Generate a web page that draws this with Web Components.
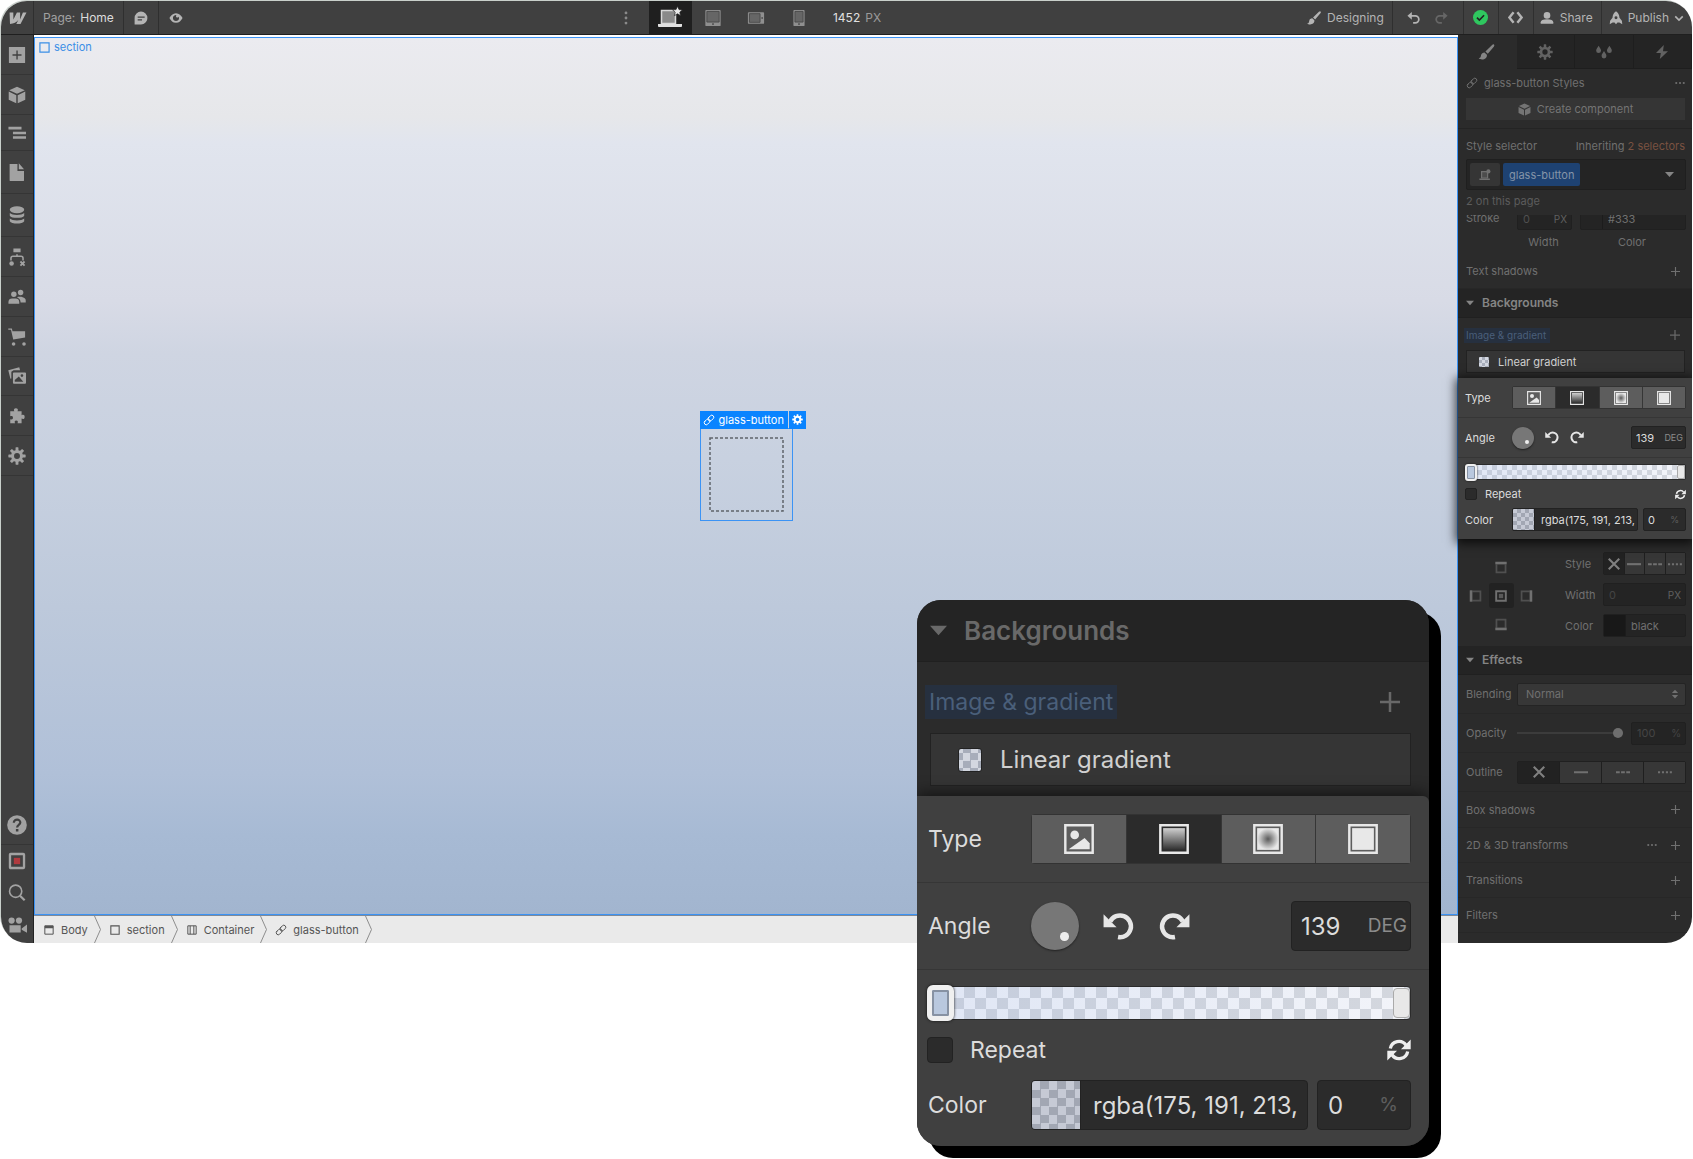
<!DOCTYPE html>
<html lang="en">
<head>
<meta charset="utf-8">
<title>Designer - Home</title>
<style>
html{background:#fff}
body{margin:0;position:relative;min-height:100vh;font-family:Inter,"Liberation Sans",sans-serif;font-size:11px;line-height:16px}
zoom-card{position:absolute;top:600px;right:264px}
</style>
</head>
<body>
<designer-app></designer-app>
<zoom-card></zoom-card>
<script>
const gearTeeth = (c, r, w, h) => [0,45,90,135,180,225,270,315].map(a => `<rect x="${c-w/2}" y="${c-r}" width="${w}" height="${h}" rx=".5" transform="rotate(${a} ${c} ${c})"/>`).join('');
const gear = `<circle cx="10" cy="10" r="5" fill="none" stroke="currentColor" stroke-width="3.4"/>${gearTeeth(10,9.6,3.2,4)}`;
const cube = `<path d="M10 .8l8.6 3.9L10 8.700 1.400 4.700zM.8 6.200l8.400 4v9L.8 15.200zM19.200 6.200l-8.400 4v9l8.400-4z"/>`;
const link = `<g fill="none" stroke="currentColor" stroke-width="1.500" stroke-linecap="round" transform="rotate(-45 8 8)"><rect x="-1.500" y="4.800" width="10.500" height="6.400" rx="3.200"/><rect x="7" y="4.800" width="10.500" height="6.400" rx="3.200"/></g>`;
const brush = `<path d="M15.400.5c.7.6.5 1.400-.1 2.200L9.300 9.800 6.900 7.500 13.600.9c.6-.5 1.300-.8 1.800-.4zM6 8.400l2.400 2.300c.4 2.800-2 4.700-4.800 4.800-1.400 0-2.700-.5-3.400-1.200 2.100-.4 1.900-1.500 2.400-3.300C3 9.500 4.300 8.400 6 8.400z"/>`;
const undo = `<path d="M2.500 5.500h7a4 4 0 0 1 0 8H7" fill="none" stroke="currentColor" stroke-width="2"/><path d="M.5 5.500L5.500 1v9z"/>`;
const rotate = `<path d="M4 5.300a6 6 0 1 1 4.300 8.500" fill="none" stroke="currentColor" stroke-width="2.500"/><path d="M.3 1.200v7.200h7.200z"/>`;
const ICONS = {
  logo:[20,`<path d="M19.500 4.500l-6 11.600H9.300l2-4C9.600 14.300 6.900 15.800 3 16.100l-.4-11.600h3.700l.1 7 3.500-7h3.200l0 6.900 2.800-6.900z"/>`],
  add:[20,`<path fill-rule="evenodd" d="M1.500 1h17a.5.500 0 0 1 .5.500v17a.5.500 0 0 1-.5.500h-17a.5.500 0 0 1-.5-.5v-17a.5.500 0 0 1 .5-.5zM9.300 5v4.300H5v1.500h4.300V15h1.500v-4.200H15V9.300h-4.200V5z"/>`],
  cube:[20,cube],
  nav:[20,`<path d="M.5 3H15v3H.5zM5.500 8.500H20v3H5.500zM5.500 13.500H20v3H5.500z"/>`],
  page:[20,`<path d="M1.800 1v18.500a.5.500 0 0 0 .5.500h15a.5.500 0 0 0 .5-.5V9H10.500V1zM12 .3l5.800 6.700H12z"/>`],
  data:[20,`<ellipse cx="10" cy="4.200" rx="8" ry="3.800"/><path d="M2 7.800c2.500 2.900 13.500 2.900 16 0v2.900c-1.500 3.300-14.500 3.300-16 0zM2 14c2.500 2.900 13.500 2.900 16 0v2.900c-1.500 3.400-14.500 3.400-16 0z"/>`],
  tree:[20,`<path d="M6 .5h8v4.200H6z"/><path d="M10 7v3M3.300 14v-2.500c0-1.500.7-2.300 2.200-2.300h9c1.500 0 2.200.8 2.200 2.300V14" fill="none" stroke="currentColor" stroke-width="1.700"/><circle cx="4" cy="17.200" r="2.500"/><path d="M13.800 15l4.600 4.600M18.400 15l-4.600 4.600" stroke="currentColor" stroke-width="2"/>`],
  users:[20,`<circle cx="6.500" cy="7" r="3"/><circle cx="14" cy="5" r="3"/><path d="M.5 17.500v-2c0-2.500 1.700-3.800 4-3.800h4c2.300 0 4 1.300 4 3.800v2zM10 10.200c1-.6 5-.6 6.200 0 2.300.6 3.500 1.700 3.500 3.600V16H14c0-2.800-1.500-4.500-4-5.800z"/>`],
  cart:[20,`<path d="M.3.500h4L5 3.500h14v7L7.600 12.600 5.800 12.800 3.300 2H.3z"/><circle cx="6.200" cy="17.800" r="2"/><circle cx="17.800" cy="17.800" r="2"/>`],
  images:[20,`<path d="M.3 3.500L12.500.3l.9 3.200H6.200l-2.500 1.800v7.600l-1 .2z"/><path fill-rule="evenodd" d="M6.500 6h12.500a1 1 0 0 1 1 1v10.500a1 1 0 0 1-1 1H6.500a1 1 0 0 1-1-1V7a1 1 0 0 1 1-1zM7.500 16.500h9.500l-5-6-4.500 4zM15.500 8a1.500 1.500 0 1 0 0 3 1.500 1.500 0 0 0 0-3z"/>`],
  puzzle:[20,`<path d="M2.500 4.800H7C6 2.500 7 1.500 8.800 1.500s2.800 1 1.800 3.300h4.500v4.300c2.300-1 3.400 0 3.400 1.900s-1.100 2.900-3.400 1.900v5.100h-4.500c.9-2.400 0-3.100-1.400-3.100s-2.300.7-1.400 3.100H2.500v-4.500c2 .7 3-.1 3-1.600s-1-2.300-3-1.500z"/>`],
  gear:[20,gear],
  help:[20,`<circle cx="10" cy="10" r="9.800"/><path d="M6.800 7.800c0-4.300 6.800-4 6.500-.1-.2 2.100-3.200 2.200-3.200 4.700" fill="none" stroke="#404040" stroke-width="2.200"/><rect x="8.900" y="14" width="2.500" height="2.500" fill="#404040"/>`],
  record:[20,`<rect x="2.200" y="2.200" width="15.600" height="15.600" rx=".8" fill="none" stroke="currentColor" stroke-width="2.600"/><rect x="6.500" y="6.500" width="7" height="7" fill="#b03a3e"/>`],
  search:[20,`<circle cx="8.500" cy="8" r="6.800" fill="none" stroke="currentColor" stroke-width="1.800"/><path d="M13.300 13l5.200 5" stroke="currentColor" stroke-width="2.500"/>`],
  camera:[20,`<circle cx="4.600" cy="5.600" r="3.100"/><circle cx="12" cy="5.600" r="3.100"/><path d="M2.500 10.300h11.200v7.200H2.500zM14.700 13.400l5.300-3.800v8.200l-5.300-3z"/>`],
  comment:[16,`<path fill-rule="evenodd" d="M8 .7a7.300 7.300 0 0 1 7.300 7.300c0 4-3.200 7.300-7.300 7.300H.7V8A7.300 7.300 0 0 1 8 .7zM4.200 6.200v1.500h8V6.200zM4.200 9.300v1.500h5V9.300z"/>`],
  eye:[16,`<path fill-rule="evenodd" d="M8 2.500c3.500 0 6 2.500 7.500 5.500-1.500 3-4 5.500-7.500 5.500S2 11 .5 8C2 5 4.500 2.500 8 2.500zm0 2C6 4.500 4.500 6 4.500 8S6 11.500 8 11.500 11.500 10 11.500 8c0-.6-.1-1-.4-1.500C10.700 8 8 8 8 6c0-.6.200-1 .6-1.400z"/>`],
  dotsv:[16,`<circle cx="8" cy="2.200" r="1.600"/><circle cx="8" cy="8" r="1.600"/><circle cx="8" cy="13.800" r="1.600"/>`],
  dots:[16,`<circle cx="2" cy="8" r="1.700"/><circle cx="8" cy="8" r="1.700"/><circle cx="14" cy="8" r="1.700"/>`],
  laptop:[24,`<path d="M3.500 4.500h14v13h-14z" fill="#8a8a8a" stroke="#d8d8d8" stroke-width="1.500"/><path d="M0 18h24v2.300l-.6.700H.6L0 20.300z" fill="#e0e0e0"/><path d="M19.500.3l1.500 3.300 3.400.3-2.600 2.300.8 3.500-3.100-1.900-3.100 1.900.8-3.500-2.600-2.300 3.400-.3z" fill="#e8e8e8" stroke="#1f1f1f" stroke-width=".7"/>`],
  tablet:[20,`<path d="M2.500 1h15a1 1 0 0 1 1 1v16a1 1 0 0 1-1 1h-15a1 1 0 0 1-1-1V2a1 1 0 0 1 1-1z" fill="#8f8f8f"/><path d="M3.200 2.700h13.600v11.800H3.200z" fill="#666" stroke="#484848"/><circle cx="10" cy="16.800" r=".9" fill="#303030"/>`],
  landscape:[20,`<path d="M2 3.500h16a1 1 0 0 1 1 1v11a1 1 0 0 1-1 1H2a1 1 0 0 1-1-1v-11a1 1 0 0 1 1-1z" fill="#8f8f8f"/><path d="M2.700 5.200h11.800v9.600H2.700z" fill="#666" stroke="#484848"/><circle cx="16.800" cy="10" r=".9" fill="#303030"/>`],
  phone:[20,`<path d="M4.800 1h10.400a1 1 0 0 1 1 1v16a1 1 0 0 1-1 1H4.800a1 1 0 0 1-1-1V2a1 1 0 0 1 1-1z" fill="#8f8f8f"/><path d="M5.500 2.700h9v11.800h-9z" fill="#666" stroke="#484848"/><circle cx="10" cy="16.800" r=".9" fill="#303030"/>`],
  brush:[16,brush], undo:[16,undo], redo:[16,`<g transform="matrix(-1 0 0 1 16 0)">${undo}</g>`],
  rotl:[16,rotate], rotr:[16,`<g transform="matrix(-1 0 0 1 16 0)">${rotate}</g>`],
  check:[16,`<circle cx="8" cy="8" r="8" fill="#2fc75f"/><path d="M4.200 8.200l2.600 2.600 5-5.200" fill="none" stroke="#222" stroke-width="1.700"/>`],
  code:[16,`<path d="M6 2.500L1.500 8 6 13.500M10 2.500l4.500 5.500-4.500 5.500" fill="none" stroke="currentColor" stroke-width="2.600"/>`],
  person:[16,`<circle cx="8" cy="5" r="3.800"/><path d="M.8 14.500v-1.600c0-2.300 2.600-3.400 7.200-3.400s7.200 1.100 7.200 3.400v1.600z"/>`],
  rocket:[16,`<path fill-rule="evenodd" d="M8 .3c2.600 1.900 3.800 4.300 4 7.400l2.700 3.500.5 4-3.400-2.200H9.700L8 15l-1.700-2H4.200L.8 15.200l.5-4L4 7.700C4.200 4.600 5.400 2.200 8 .3zM8 6a1.700 1.700 0 1 0 0 3.400A1.700 1.700 0 0 0 8 6z"/>`],
  chev:[16,`<path d="M2 5.500l6 6 6-6" fill="none" stroke="currentColor" stroke-width="2.600"/>`],
  drops:[20,`<path d="M4 3c1.500 2.500 2.700 3.800 2.700 5.500a2.700 2.700 0 0 1-5.400 0C1.300 6.800 2.500 5.500 4 3zM16 3c1.500 2.500 2.700 3.800 2.700 5.500a2.700 2.700 0 0 1-5.400 0C13.300 6.800 14.500 5.500 16 3zM10 9c1.500 2.500 2.700 3.800 2.700 5.500a2.700 2.700 0 0 1-5.400 0C7.300 12.800 8.500 11.500 10 9z"/>`],
  bolt:[16,`<path d="M9.800 1L2 9h4.800L5.800 15 14 7.300H9z"/>`],
  link:[16,link],
  plus:[16,`<path d="M7 0h2v7h7v2H9v7H7V9H0V7h7z"/>`],
  down:[16,`<path d="M0 3.500h16l-8 9z"/>`],
  updown:[16,`<path d="M3 6.500L8 1l5 5.500zM3 9.500L8 15l5-5.500z"/>`],
  refresh:[16,`<path d="M2.200 7A5.800 5.800 0 0 1 12.700 4.800M13.800 9A5.800 5.800 0 0 1 3.300 11.200" fill="none" stroke="currentColor" stroke-width="2.200"/><path d="M15.800 1v6.500H9.300zM.2 15V8.500h6.500z"/>`],
  image:[16,`<path d="M.7.7h14.600v14.600H.7z" fill="none" stroke="currentColor" stroke-width="1.300"/><circle cx="5.700" cy="5.800" r="2.300"/><path d="M2.500 13.500L11 7.500l2.700 2.700v3.300z"/>`],
  linear:[16,`<defs><linearGradient id="l" x2="0" y2="1"><stop stop-color="#d0d0d0"/><stop offset="1" stop-color="#2f2f2f"/></linearGradient></defs><path d="M.7.7h14.600v14.600H.7z" fill="none" stroke="currentColor" stroke-width="1.300"/><path d="M2.200 2.200h11.600v11.600H2.200z" fill="url(#l)"/>`],
  radial:[16,`<defs><radialGradient id="r"><stop stop-color="#5a5a5a"/><stop offset="1" stop-color="#e8e8e8"/></radialGradient></defs><path d="M.7.7h14.600v14.600H.7z" fill="none" stroke="currentColor" stroke-width="1.300"/><path d="M2.200 2.200h11.600v11.600H2.200z" fill="url(#r)"/>`],
  solid:[16,`<path d="M.7.7h14.600v14.600H.7z" fill="none" stroke="currentColor" stroke-width="1.300"/><path d="M2.200 2.200h11.600v11.600H2.200z"/>`],
  cross:[16,`<path d="M2 2l12 12M14 2L2 14" fill="none" stroke="currentColor" stroke-width="2.400"/>`],
  line:[16,`<path d="M0 7h16v2.400H0z"/>`],
  dash:[16,`<path d="M0 7h4.300v2.400H0zM5.800 7h4.300v2.400H5.800zM11.700 7H16v2.400h-4.300z"/>`],
  dotted:[16,`<path d="M0 7h2.400v2.400H0zM4.500 7h2.400v2.400H4.500zM9 7h2.400v2.400H9zM13.500 7h2.400v2.400h-2.400z"/>`],
  side:[16,`<path d="M2.800 5v9.200h10.400V5" fill="none" stroke="currentColor" stroke-width="2" opacity=".55"/><path d="M1.500 2h13v3h-13z"/>`],
  sides:[16,`<path d="M2.500 2.500h11v11h-11z" fill="none" stroke="currentColor" stroke-width="2.200"/><path d="M5.500 5.500h5v5h-5z" opacity=".7"/>`],
  state:[16,`<path d="M3.500 3.500h8v8.500h-8z" fill="currentColor" fill-opacity=".4" stroke="currentColor" stroke-width="1.600"/><path d="M.5 12.800h14v2H.5z"/><circle cx="12.500" cy="3.200" r="2.800"/>`],
  body:[12,`<path d="M1 1h10v10H1z" fill="none" stroke="currentColor" stroke-width="1.200"/><path d="M1 1h10v3H1z"/>`],
  box:[12,`<path d="M1 1h10v10H1z" fill="none" stroke="currentColor" stroke-width="1.300"/>`],
  container:[12,`<path d="M1 1h10v10H1zM3.800 1v10M8.200 1v10" fill="none" stroke="currentColor" stroke-width="1.200"/>`]
};
customElements.define('ui-icon', class extends HTMLElement {
  connectedCallback(){
    if (this.shadowRoot) return;
    const [s, d] = ICONS[this.getAttribute('name')];
    this.attachShadow({mode:'open'}).innerHTML = `<style>:host{display:inline-block;flex:none;width:16px;height:16px}svg{display:block;width:100%;height:100%;overflow:visible}</style><svg viewBox="0 0 ${s} ${s}" fill="currentColor" aria-hidden="true">${d}</svg>`;
  }
});

const BASE = `
*{box-sizing:border-box}
button,input,select{font:inherit;color:inherit;margin:0;padding:0;border:0;background:none;border-radius:0;outline:0;min-width:0}
button{display:flex;align-items:center;justify-content:center;cursor:pointer}
a{color:inherit;text-decoration:none}
input[type=checkbox],input[type=range]{appearance:none}
`;
const define = (name, css, html) => customElements.define(name, class extends HTMLElement {
  constructor(){
    super();
    const t = document.createElement('template');
    t.innerHTML = `<style>${BASE}${css}</style>${html}`;
    this.attachShadow({mode:'open'}).append(t.content.cloneNode(true));
  }
});
const icon = n => `<ui-icon name="${n}"></ui-icon>`;
const ibtn = (n, label, cls='') => `<button class="${cls}" aria-label="${label}">${icon(n)}</button>`;

define('top-bar', `
:host{display:grid;grid-template-columns:35.6% 1fr auto;height:34px;background:#404040;border-bottom:1px solid #1f1f1f;color:#b4b4b4;font-size:12px}
.group{display:flex}
button{height:33px;border-right:1px solid #2f2f2f}
.logo{width:33px}.logo ui-icon{width:20px;height:20px}
.page{padding:0 9px;gap:5px}.page b{font-weight:400;color:#dcdcdc}
.page span{color:#a0a0a0}
.tool{width:35px}.tool ui-icon{width:14px;height:14px}
.mid{display:flex;align-items:center}
.mid button{border:0;width:43px}
.mid .more{width:46px}.more ui-icon{width:14px;height:14px;color:#8a8a8a}
.mid .on{background:#1f1f1f}.on ui-icon{width:24px;height:24px}
.dev ui-icon{width:18px;height:18px}
.size{padding-left:12px;display:flex;gap:5px;color:#e0e0e0}.size i{font-style:normal;color:#9a9a9a}
.txt{gap:6px;padding:0 8px}.txt ui-icon{width:14px;height:14px}
.share{padding:0 8px 0 6px}
.nb{border:0}.dim{color:#666}
.txt .chev{width:10px;height:10px}
.last{border:0;padding:0 8px 0 7px;gap:5px}
.pair{display:flex;padding:0 8px;border-right:1px solid #2f2f2f}
.pair button{width:27px;border:0}.pair ui-icon{width:14px;height:14px}
.hist{width:35px}.hist ui-icon{width:15px;height:15px}
`, `<div class="group">
<button class="logo" aria-label="Menu">${icon('logo')}</button>
<button class="page"><span>Page:</span><b>Home</b></button>
${ibtn('comment','Comments','tool')}${ibtn('eye','Preview','tool nb')}</div>
<div class="mid">${ibtn('dotsv','More','more')}${ibtn('laptop','Desktop','on')}${ibtn('tablet','Tablet','dev')}${ibtn('landscape','Mobile landscape','dev')}${ibtn('phone','Mobile portrait','dev')}
<div class="size"><span>1452</span><i>PX</i></div></div>
<div class="group">
<button class="txt">${icon('brush')}<span>Designing</span></button>
<div class="pair">${ibtn('undo','Undo')}${ibtn('redo','Redo','dim')}</div>
${ibtn('check','Status','hist')}${ibtn('code','Export code','hist')}
<button class="txt share">${icon('person')}<span>Share</span></button>
<button class="txt last">${icon('rocket')}<span>Publish</span><ui-icon class="chev" name="chev"></ui-icon></button></div>`);

define('tool-rail', `
:host{display:flex;flex-direction:column;background:#404040;color:#a2a2a2;border-right:1px solid #222;padding-bottom:2px}
button{height:40px;border-bottom:1px solid #353535;width:100%;flex:none}
.s{height:36px}.m{height:39px}.l{height:43px}
ui-icon{width:18px;height:18px}
.gap{flex:1}
.bottom{border:0;height:32px}
.round ui-icon{width:20px;height:20px}
`, `${ibtn('add','Add')}${ibtn('cube','Components')}${ibtn('nav','Navigator','s')}${ibtn('page','Pages','l')}${ibtn('data','CMS','l')}${ibtn('tree','Logic')}${ibtn('users','Users')}${ibtn('cart','Ecommerce')}${ibtn('images','Assets','m')}${ibtn('puzzle','Apps')}${ibtn('gear','Settings')}
<div class="gap"></div>
${ibtn('help','Help','round')}${ibtn('record','Audit','bottom')}${ibtn('search','Search','bottom')}${ibtn('camera','Tutorials','bottom round')}`);

define('element-outline', `
:host{display:block;position:relative;width:93px;height:93px;border:1px solid #3b93f5;padding:8px}
.drop{display:block;width:75px;height:75px}
.tag{position:absolute;left:-1px;bottom:100%;display:flex;gap:1px;color:#fff;white-space:nowrap;font-size:11px}
.name{display:flex;align-items:center;gap:5px;background:#0a84ff;height:18px;padding:0 4px}
.name ui-icon{width:10px;height:10px}
button{background:#0a84ff;width:17px;height:18px}
button ui-icon{width:11px;height:11px}
`, `<div class="tag"><span class="name">${icon('link')}<slot></slot></span>${ibtn('gear','Element settings')}</div><svg class="drop" viewBox="0 0 75 75"><rect x="1" y="1" width="73" height="73" fill="none" stroke="#5f646b" stroke-width="1.500" stroke-dasharray="3 2"/></svg>`);

define('design-canvas', `
:host{display:block;background:#fff;padding-top:2px}
section{height:100%;position:relative;border:1px solid #3b93f5;display:flex;align-items:center;justify-content:center;padding-bottom:4px;
background:linear-gradient(#ebebf0 0,#e6e7ea 9%,#e1e5ee 12%,#d8dbe6 30%,#cfd5e2 36%,#c8d1e0 48%,#bdc9db 65%,#b0c0d8 84%,#a7bad4 91%,#a2b5cf 100%)}
.label{position:absolute;left:4px;top:1px;display:flex;align-items:center;gap:4px;color:#3b8fe6;height:16px}
.label ui-icon{width:11px;height:11px}
`, `<section><div class="label">${icon('box')}<span>section</span></div><element-outline>glass-button</element-outline></section>`);

define('crumb-bar', `
:host{display:flex;height:28px;background:#eaeaea;border-top:1px solid #7f8a99;color:#555;padding-left:1px}
a{display:flex;align-items:center;gap:7px;padding:0 0 0 9px}
a ui-icon{width:10px;height:10px}
svg{width:7px;height:27px;margin-left:-1px;fill:none;stroke:#8d8d8d}
`, ['body|Body','box|section','container|Container','link|glass-button'].map(x=>{const [i,t]=x.split('|');return `<a href="#">${icon(i)}<span>${t}</span><svg viewBox="0 0 7 27"><path d="M.5 0l6 13.500-6 13.500"/></svg></a>`}).join(''));

define('section-head', `
:host{display:flex;align-items:center;gap:8px;height:29px;padding-left:8px;background:#242424;border-bottom:1px solid #202020;color:#858585;font-weight:600;font-size:12px}
ui-icon{width:8px;height:8px}
:host([large]){height:62px;gap:17px;padding-left:13px;font-size:26px;color:#696969}
:host([large]) ui-icon{width:17px;height:17px}
`, `${icon('down')}<span><slot></slot></span>`);

define('layer-list', `
:host{display:block;--pad:8px;--end:7px;padding:0 var(--end) 5px var(--pad);color:#686868}
.top{display:flex;align-items:center;justify-content:space-between;height:32px;padding:2px 5px 0 0}
.top span{font-size:10px;color:#4a5f7a;background:#26303f;padding:0 4px 0 2px;margin-left:-2px;line-height:15px}
.top ui-icon{width:10px;height:10px}
.layer{width:100%;height:23px;justify-content:flex-start;background:#353535;border:1px solid #222;gap:9px;padding-left:12px;color:#d0d0d0}
.layer i{width:10px;height:10px;border-radius:1px;background:conic-gradient(#a7adba 25%,#d3d7e0 0 50%,#a7adba 0 75%,#d3d7e0 0) 0 0/6px 6px}
:host([large]){--pad:13px;--end:18px;padding-bottom:10px;font-size:24px;line-height:34px}
:host([large]) .top{height:71px;padding:8px 11px 0 0}
:host([large]) .top span{font-size:23px;line-height:34px;padding:0 4px;margin-left:-5px}
:host([large]) .top ui-icon{width:20px;height:20px}
:host([large]) .layer{height:53px;gap:18px;padding-left:27px}
:host([large]) .layer i{width:24px;height:24px;border:1px solid #222;border-radius:3px;background-size:15px 15px;background-position:4px 4px}
`, `<div class="top"><span>Image &amp; gradient</span>${ibtn('plus','Add background')}</div><button class="layer"><i></i><span>Linear gradient</span></button>`);

define('gradient-editor', `
:host{display:block;position:relative;background:#404040;color:#dcdcdc;box-shadow:0 2px 10px 2px rgba(0,0,0,.75);
--row:40px;--h:23px;--label:47px;--pad:7px;--end:6px;--ic:14px;--suffix:9px;--text:11px}
:host([large]){--row:87px;--h:50px;--label:103px;--pad:11px;--end:18px;--ic:30px;--suffix:19px;--text:24px;font-size:23px;line-height:34px;box-shadow:0 -2px 16px rgba(0,0,0,.6);border-radius:0 6px 0 0}
.row{display:flex;align-items:center;height:var(--row);padding:0 var(--end) 0 var(--pad);border-bottom:1px solid #363636}
.row>label,.row>.lab,.color>label{width:var(--label);flex:none}
.segs{display:flex;flex:1;height:var(--h);background:#363636;border:1px solid #333;border-radius:2px;gap:1px}
.segs button{flex:1;background:#5d5d5d;color:#e8e8e8}
.segs ui-icon{width:var(--ic);height:var(--ic)}
.segs .on{background:#2b2b2b}
.dial{width:22px;height:22px;border-radius:50%;background:#777;position:relative;box-shadow:0 1px 2px #222}
.dial::after{content:"";position:absolute;width:18%;height:18%;border-radius:50%;background:#eee;left:61%;top:63%}
.rot{margin-left:11px;color:#e6e6e6}
.rot+.rot{margin-left:13px}
.box{display:flex;align-items:center;height:var(--h);background:#2b2b2b;border:1px solid #222;border-radius:2px;overflow:hidden}
.angle{width:55px;margin-left:auto;padding:0 2px 0 4px}
.box input{flex:1;width:0;height:100%;font-size:var(--text)}
.box span{font-size:var(--suffix);color:#8b8b8b}
.bar{height:16px;margin:6px 6px 0 8px;border:1px solid #2b2b2b;display:flex;justify-content:space-between;align-items:center;border-radius:2px;
background:linear-gradient(90deg,rgba(175,195,235,.25),rgba(255,255,255,.15)),conic-gradient(#ccd0d8 25%,#f0f2f8 0 50%,#ccd0d8 0 75%,#f0f2f8 0) 0 0/10px 10px}
.stop{width:8px;height:14px;background:#e8e8e8;border:1px solid #aaa;border-radius:2px}
.stop.sel{width:12px;height:17px;margin-left:-2px;border:2px solid #f0f0f0;background:#b9c8de;box-shadow:inset 0 0 0 1px #8792a3,0 0 2px #111;border-radius:3px}
.repeat{display:flex;align-items:center;justify-content:space-between;height:16px;margin:6px var(--end) 6px 7px}
.repeat label{display:flex;align-items:center;gap:8px}
.repeat input{width:12px;height:12px;background:#2b2b2b;border:1px solid #222;border-radius:2px}
.repeat ui-icon{width:11px;height:11px;color:#eee}
.color{display:flex;align-items:center;padding:0 var(--end) 8px var(--pad)}
.rgba{flex:1}
.rgba i{width:22px;height:100%;flex:none;background:conic-gradient(#a2a7b3 25%,#c6cad5 0 50%,#a2a7b3 0 75%,#c6cad5 0) 0 0/8px 8px;border-right:1px solid #222}
.rgba input{padding-left:6px}
.alpha{width:43px;margin-left:5px;padding:0 6px 0 4px}
.box.alpha span{color:#5e5e5e}
:host([large]) .box,:host([large]) .segs{border-radius:4px}
:host([large]) .dial{width:48px;height:48px}
:host([large]) .rot{margin-left:24px}
:host([large]) .rot ui-icon{width:29px;height:29px}
:host([large]) .rot+.rot{margin-left:29px}
.rot ui-icon{width:13px;height:13px}
:host([large]) .angle{width:120px;padding:0 3px 0 9px}
:host([large]) .bar{height:34px;margin:16px 18px 0 13px;border-width:1px;background-size:auto,22px 22px;border-radius:4px}
:host([large]) .stop{width:17px;height:30px;border-radius:4px}
:host([large]) .stop.sel{width:27px;height:36px;margin-left:-4px;border-width:5px;border-radius:6px;box-shadow:inset 0 0 0 2px #8792a3,0 0 3px #111}
:host([large]) .repeat{height:34px;margin:13px 18px 13px 10px}
:host([large]) .repeat label{gap:17px}
:host([large]) .repeat input{width:26px;height:26px;border-radius:4px}
:host([large]) .repeat ui-icon{width:24px;height:24px}
:host([large]) .color{padding-bottom:16px}
:host([large]) .rgba i{width:49px;background-size:17px 17px}
:host([large]) .rgba input{padding-left:12px}
:host([large]) .alpha{width:94px;margin-left:9px;padding:0 12px 0 10px}
`, `<div class="row"><span class="lab">Type</span><div class="segs">${ibtn('image','Image')}${ibtn('linear','Linear gradient','on')}${ibtn('radial','Radial gradient')}${ibtn('solid','Color overlay')}</div></div>
<div class="row"><label for="a">Angle</label><div class="dial"></div>${ibtn('rotl','Rotate left','rot')}${ibtn('rotr','Rotate right','rot')}<div class="box angle"><input id="a" value="139"><span>DEG</span></div></div>
<div class="bar"><div class="stop sel"></div><div class="stop"></div></div>
<div class="repeat"><label><input type="checkbox">Repeat</label>${ibtn('refresh','Reverse stops')}</div>
<div class="color"><label for="c">Color</label><div class="box rgba"><i></i><input id="c" value="rgba(175, 191, 213,"></div><div class="box alpha"><input aria-label="Alpha" value="0"><span>%</span></div></div>`);

define('add-row', `
:host{display:flex;align-items:center;height:35px;padding:0 12px 0 8px;border-bottom:1px solid #272727}
span{flex:1}
ui-icon{width:9px;height:9px}
slot[name=extra]{display:block}
.plus{margin-left:14px}
`, `<span><slot></slot></span><slot name="extra"></slot>${ibtn('plus','Add','plus')}`);

define('style-panel', `
:host{display:block;background:#2b2b2b;color:#707070;position:relative;padding-bottom:10px}
.tabs{display:flex;height:34px;background:#242424}
.tabs button{flex:1;border-right:1px solid #1e1e1e;border-bottom:1px solid #1e1e1e;color:#626262}
.tabs .on{background:#2b2b2b;color:#858585;border-color:#2b2b2b}
.tabs ui-icon{width:16px;height:16px}.tabs .on ui-icon{width:19px;height:16px}
.tabs .wide{width:18px;height:18px}
.title{display:flex;align-items:center;gap:7px;height:29px;padding:0 7px 1px 9px}
.title ui-icon{width:10px;height:10px}.title span{flex:1}
.create{width:auto;align-self:stretch;height:22px;background:#353535;gap:6px;margin:0 7px 0 8px;color:#747474}
.create ui-icon{width:13px;height:13px}
.head{display:flex;flex-direction:column;border-bottom:1px solid #242424;padding-bottom:8px}
.sel{display:flex;justify-content:space-between;padding:9px 7px 5px 8px}
.sel em{font-style:normal;color:#7a5241}
.combo{display:flex;align-items:center;height:31px;margin:0 6px 0 8px;background:#242424;border:1px solid #1f1f1f;border-radius:2px;padding:0 11px 0 3px;gap:3px}
.combo .st{width:30px;height:23px;background:#353535;border-radius:2px}.st ui-icon{width:12px;height:12px}
.combo .tag{height:23px;background:#1e4272;color:#8494a8;border-radius:2px;padding:0 6px;margin-right:auto}
.combo .dn ui-icon{width:9px;height:9px;color:#858585}
.note{height:25px;padding:3px 8px;color:#5c5c5c}
.clip{overflow:hidden;height:15px;display:flex;align-items:flex-end;padding:0 6px 0 8px}
.clip label{width:51px;flex:none;line-height:23px}
.field{display:flex;align-items:center;height:23px;background:#242424;border:1px solid #202020;border-radius:2px;flex:1;padding:0 4px 0 5px}
.field input{flex:1;width:0;height:100%;color:inherit}
.field span{font-size:10px}
.clip .px{flex:none;width:55px;margin-right:8px;color:#505050}.clip .px span{color:#606060}
.sw{width:22px;height:100%;margin:0 5px 0 -5px;border-right:1px solid #1c1c1c}
.caps{display:flex;height:24px;align-items:center;text-align:center;font-size:11px;padding:0 7px 0 58px}
.caps span:first-child{width:55px;margin-right:8px}.caps span:last-child{flex:1}
.borders{display:flex;padding:13px 6px 7px 4px}
.sides{display:grid;grid-template-columns:26px 26px 26px;grid-template-rows:29px 29px 29px;place-items:center;flex:none}
.sides ui-icon{width:14px;height:14px}
.sides button{width:25px;height:25px;border-radius:3px}
.sides .on{background:#222}
.l ui-icon{transform:rotate(-90deg)}.r ui-icon{transform:rotate(90deg)}.b ui-icon{transform:rotate(180deg)}
.sides button:nth-child(1){grid-column:2}.sides button:nth-child(2){grid-row:2;grid-column:1}.sides button:nth-child(3){grid-row:2;grid-column:2}.sides button:nth-child(4){grid-row:2;grid-column:3}.sides button:nth-child(5){grid-row:3;grid-column:2}
.bf{flex:1;margin-left:25px;display:flex;flex-direction:column;gap:8px}
.bf>div{display:flex;align-items:center;height:23px}
.bf label,.bf .lab{width:38px;flex:none}
.dim{color:#444}.dim span{color:#606060}
.black{background:#181818}
.segs{display:flex;flex:1;height:23px;background:#1f1f1f;border:1px solid #202020;gap:1px;border-radius:2px}
.segs button{flex:1;background:#373737}.segs .on{background:#222;color:#808080}
.segs ui-icon{width:14px;height:14px}
.prop{display:flex;align-items:center;height:39px;padding:0 6px 0 8px;border-bottom:1px solid #272727}
.prop>label,.prop>.lab{width:51px;flex:none}
.selbox{flex:1;display:flex;align-items:center;height:23px;background:#373737;border:1px solid #242424;border-radius:2px;padding-right:5px}
select{appearance:none;flex:1;height:21px;padding-left:8px}
.selbox ui-icon{width:10px;height:10px}
input[type=range]{width:105px;flex:1;height:10px;background:linear-gradient(#3c3c3c,#3c3c3c) center/100% 2px no-repeat}
input[type=range]::-webkit-slider-thumb{appearance:none;width:10px;height:10px;border-radius:50%;background:#6e6e6e}
.op{flex:none;width:55px;margin-left:8px}
.op span{color:#444}
.ex ui-icon{width:10px;height:10px}
add-row.first{height:36px}
`, `<div class="tabs">${ibtn('brush','Style','on')}${ibtn('gear','Settings')}<button aria-label="Style manager"><ui-icon class="wide" name="drops"></ui-icon></button>${ibtn('bolt','Interactions')}</div>
<div class="head"><div class="title">${icon('link')}<span>glass-button Styles</span>${ibtn('dots','More')}</div>
<button class="create">${icon('cube')}<span>Create component</span></button></div>
<div class="sel"><span>Style selector</span><span>Inheriting <em>2 selectors</em></span></div>
<div class="combo">${ibtn('state','States','st')}<button class="tag">glass-button</button>${ibtn('down','Open','dn')}</div>
<div class="note">2 on this page</div>
<div class="clip"><label for="sw">Stroke</label><div class="field px"><input id="sw" value="0"><span>PX</span></div><div class="field"><i class="sw"></i><input aria-label="Stroke color" value="#333"></div></div>
<div class="caps"><span>Width</span><span>Color</span></div>
<add-row>Text shadows</add-row>
<section-head>Backgrounds</section-head>
<layer-list></layer-list>
<gradient-editor></gradient-editor>
<div class="borders"><div class="sides">${ibtn('side','Top')}${ibtn('side','Left','l')}${ibtn('sides','All sides','on')}${ibtn('side','Right','r')}${ibtn('side','Bottom','b')}</div>
<div class="bf"><div><span class="lab">Style</span><div class="segs">${ibtn('cross','None','on')}${ibtn('line','Solid')}${ibtn('dash','Dashed')}${ibtn('dotted','Dotted')}</div></div>
<div><label for="bw">Width</label><div class="field dim"><input id="bw" value="0"><span>PX</span></div></div>
<div><label for="bc">Color</label><div class="field"><i class="sw black"></i><input id="bc" value="black"></div></div></div></div>
<section-head>Effects</section-head>
<div class="prop"><label for="bl">Blending</label><div class="selbox"><select id="bl"><option>Normal</option></select>${icon('updown')}</div></div>
<div class="prop"><label for="op">Opacity</label><input id="op" type="range" value="100"><div class="field op dim"><input aria-label="Opacity percent" value="100"><span>%</span></div></div>
<div class="prop"><span class="lab">Outline</span><div class="segs">${ibtn('cross','None','on')}${ibtn('line','Solid')}${ibtn('dash','Dashed')}${ibtn('dotted','Dotted')}</div></div>
<add-row class="first">Box shadows</add-row>
<add-row>2D &amp; 3D transforms<button slot="extra" class="ex" aria-label="More">${icon('dots')}</button></add-row>
<add-row>Transitions</add-row>
<add-row>Filters</add-row>`);

define('zoom-card', `
:host{display:block;width:512px;background:#2b2b2b;border-radius:24px;box-shadow:12px 12px 0 #000}
.in{overflow:hidden;border-radius:24px}
`, `<div class="in"><section-head large>Backgrounds</section-head><layer-list large></layer-list><gradient-editor large></gradient-editor></div>`);

define('designer-app', `
:host{display:block;margin:0 1px;padding-top:1px}
.app{display:grid;grid-template-columns:33px 1fr 234px;grid-template-rows:auto 1fr auto;border-radius:26px;overflow:hidden;box-shadow:-1px -1px 0 #c9d0cb}
top-bar{grid-column:1/4}
tool-rail{grid-row:2/4}
design-canvas{grid-row:2;grid-column:2}
crumb-bar{grid-row:3;grid-column:2}
style-panel{grid-row:2/4;grid-column:3}
`, `<div class="app"><top-bar></top-bar><tool-rail></tool-rail><design-canvas></design-canvas><crumb-bar></crumb-bar><style-panel></style-panel></div>`);
</script>
</body>
</html>
